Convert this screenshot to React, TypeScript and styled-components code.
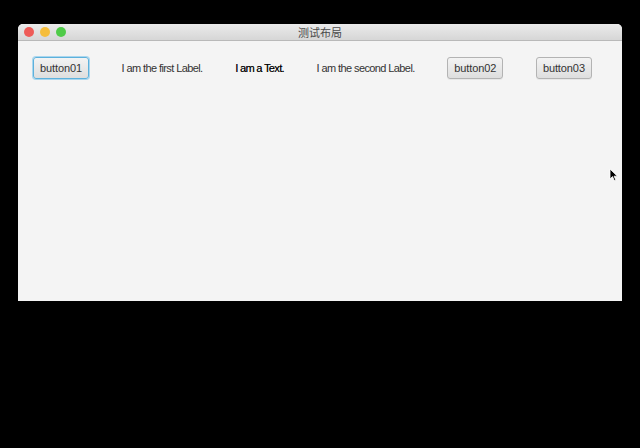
import React from "react";
import styled, { createGlobalStyle } from "styled-components";

const GlobalStyle = createGlobalStyle`
  html, body {
    margin: 0;
    padding: 0;
    background: #000;
  }
  body {
    width: 640px;
    height: 448px;
    overflow: hidden;
    font-family: "Liberation Sans", Arial, sans-serif;
  }
`;

const Screen = styled.div`
  position: relative;
  width: 640px;
  height: 448px;
  padding: 24px 0 0 18px;
  box-sizing: border-box;
`;

const Window = styled.div`
  width: 604px;
  height: 277px;
  display: flex;
  flex-direction: column;
  background: #f4f4f4;
  border-radius: 5px 5px 0 0;
  overflow: hidden;
`;

const TitleBar = styled.div`
  position: relative;
  height: 16px;
  flex-shrink: 0;
  display: flex;
  align-items: center;
  justify-content: center;
  background: linear-gradient(#ebebeb, #d6d6d6);
  border-bottom: 1px solid #b9b9b9;
`;

const Lights = styled.div`
  position: absolute;
  left: 6px;
  top: 3px;
  display: flex;
  gap: 6px;
`;

const Light = styled.span<{ $color: string }>`
  width: 10px;
  height: 10px;
  border-radius: 50%;
  background: ${(p) => p.$color};
`;

const Title = styled.span`
  font-family: "Noto Sans CJK SC", sans-serif;
  font-size: 11px;
  color: #4a4a4a;
  line-height: 16px;
`;

const Row = styled.div`
  display: flex;
  align-items: center;
  gap: 32.6px;
  padding: 16px 0 0 15px;
`;

const Button = styled.button<{ $focused?: boolean }>`
  height: 22px;
  width: 56px;
  padding: 0;
  font-family: "Liberation Sans", Arial, sans-serif;
  font-size: 11px;
  letter-spacing: -0.1px;
  color: #333;
  background: linear-gradient(#f3f3f3, #dedede);
  border: 1px solid ${(p) => (p.$focused ? "#5db1dc" : "#b3b3b3")};
  border-radius: 3px;
  box-shadow: ${(p) =>
    p.$focused ? "0 0 0 1px #a9d6ee" : "0 1px 0 rgba(0, 0, 0, 0.05)"};
`;

const Label = styled.span`
  font-size: 11px;
  color: #333;
  letter-spacing: -0.6px;
  white-space: nowrap;
`;

const Text = styled.span`
  font-size: 11px;
  color: #000;
  letter-spacing: -0.65px;
  text-shadow: 0.25px 0 0 rgba(0, 0, 0, 0.6);
  white-space: nowrap;
`;

const Cursor = styled.svg`
  position: absolute;
  left: 609px;
  top: 168px;
`;

export default function App() {
  return (
    <>
      <GlobalStyle />
      <Screen>
        <Window>
          <TitleBar>
            <Lights>
              <Light $color="#ee5b57" />
              <Light $color="#f5bd3b" />
              <Light $color="#4fcb48" />
            </Lights>
            <Title>测试布局</Title>
          </TitleBar>
          <Row>
            <Button $focused>button01</Button>
            <Label>I am the first Label.</Label>
            <Text>I am a Text.</Text>
            <Label>I am the second Label.</Label>
            <Button>button02</Button>
            <Button>button03</Button>
          </Row>
        </Window>
        <Cursor width="10" height="14" viewBox="0 0 10 14">
          <path d="M1 1 L1 11 L3.5 8.6 L5.3 12.6 L6.8 11.9 L5.1 8.2 L8.4 8.2 Z" fill="#000" stroke="#fff" strokeWidth="0.8" />
        </Cursor>
      </Screen>
    </>
  );
}
